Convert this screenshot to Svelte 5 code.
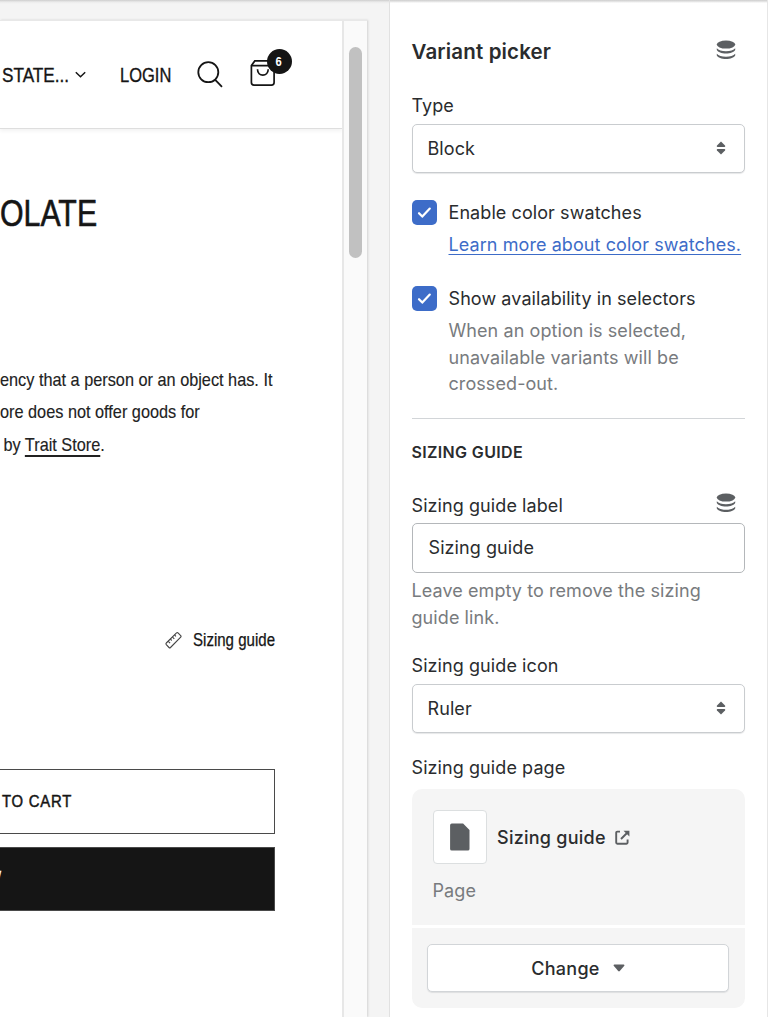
<script lang="ts">
  let type = $state('Block')
  let icon = $state('Ruler')
  let label = $state('Sizing guide')
  let swatches = $state(true)
  let availability = $state(true)
  let cartCount = $state(6)
</script>

{#snippet database()}
  <svg class="database" width="20" height="20" viewBox="0 0 20 20" fill="#5c5f62">
    <ellipse cx="10" cy="4.6" rx="9.2" ry="4" />
    <path d="M.8 8.2c1.6 1.9 5 3 9.2 3s7.6-1.1 9.2-3v1.7c-1.2 2-4.700 3.500-9.200 3.500S2 11.900.8 9.900z" />
    <path d="M.8 13.800c1.600 1.900 5 3 9.200 3s7.600-1.100 9.200-3v1.700c-1.200 2-4.700 3.500-9.200 3.500S2 17.500.8 15.500z" />
  </svg>
{/snippet}

{#snippet arrows()}
  <svg width="10" height="14" viewBox="0 0 10 14" fill="#5c5f62">
    <path d="M5 .4 9 4.500c.5.6.2 1.500-.5 1.500h-7c-.7 0-1-.9-.5-1.500z" />
    <path d="M5 13.600 9 9.500c.5-.6.2-1.500-.5-1.500h-7c-.7 0-1 .9-.5 1.500z" />
  </svg>
{/snippet}

{#snippet check()}
  <svg width="24" height="24" viewBox="0 0 24 24" fill="none" stroke="#fff" stroke-width="2.200" stroke-linecap="round" stroke-linejoin="round">
    <path d="m7 12.200 3.300 3.400 7.500-8" />
  </svg>
{/snippet}

<div class="editor">
  <div class="stage">
    <div class="frame">
      <div class="store">
        <header>
          <span class="country">STATE...</span>
          <svg class="chevron" width="11" height="8" viewBox="0 0 11 8" fill="none" stroke="#151515" stroke-width="1.500">
            <path d="m.8 1.300 4.700 4.500 4.700-4.500" />
          </svg>
          <span class="login">LOGIN</span>
          <svg class="search" width="26" height="27" viewBox="0 0 26 27" fill="none" stroke="#151515" stroke-width="1.800">
            <circle cx="11.300" cy="11.200" r="10" />
            <path d="m18 18.600 7 7.200" />
          </svg>
          <div class="cart">
            <svg width="26" height="28" viewBox="0 0 26 28" fill="none" stroke="#151515" stroke-width="1.700">
              <path d="M1.400 6.600 4.800 1.900h15.600l3.700 4.700v17a2.600 2.600 0 0 1-2.600 2.600H4a2.600 2.600 0 0 1-2.600-2.600zh22.700" />
              <path d="M7.500 10.200c0 7.800 10.700 7.800 10.700 0" />
            </svg>
            <span class="badge"><span class="narrow">{cartCount}</span></span>
          </div>
        </header>

        <main>
          <h1>OLATE</h1>
          <div class="description">
            <p>ency that a person or an object has. It</p>
            <p>ore does not offer goods for</p>
            <p class="byline">by <a href="#store">Trait Store</a>.</p>
          </div>
          <div class="guide">
            <svg width="17" height="17" viewBox="0 0 17 17" fill="none" stroke="#444" stroke-width="1.100">
              <path d="M1.300 11 11.500.900q.8-.6 1.500 0l2.700 2.700q.7.8 0 1.500L5.500 15.500q-.8.7-1.500 0l-2.700-2.800q-.7-.9 0-1.700z" />
              <path d="m3.300 9.300 1.800 1.800M5.400 7.200l1.300 1.300M7.500 5.100l1.800 1.800M9.600 3l1.300 1.300" />
            </svg>
            <span class="narrow">Sizing guide</span>
          </div>
          <button class="add" type="button"><span class="narrow">TO CART</span></button>
          <button class="buy" type="button"><span class="narrow">W</span></button>
        </main>
      </div>
      <div class="scrollbar"><div class="thumb"></div></div>
    </div>
  </div>

  <aside>
    <div class="title">
      <h2>Variant picker</h2>
      {@render database()}
    </div>

    <div class="label type-label">Type</div>
    <button class="field" type="button"><span>{type}</span>{@render arrows()}</button>

    <div class="option">
      <button class="checkbox" type="button" aria-label="Enable color swatches" onclick={() => (swatches = !swatches)}>
        {#if swatches}{@render check()}{/if}
      </button>
      <div>
        <div class="option-name">Enable color swatches</div>
        <a class="learn" href="#swatches">Learn more about color swatches.</a>
      </div>
    </div>

    <div class="option second">
      <button class="checkbox" type="button" aria-label="Show availability" onclick={() => (availability = !availability)}>
        {#if availability}{@render check()}{/if}
      </button>
      <div>
        <div class="option-name">Show availability in selectors</div>
        <p class="help">When an option is selected,<br />unavailable variants will be<br />crossed-out.</p>
      </div>
    </div>

    <hr />
    <h3>SIZING GUIDE</h3>

    <div class="label-row">
      <div class="label">Sizing guide label</div>
      {@render database()}
    </div>
    <input aria-label="Sizing guide label" bind:value={label} />
    <p class="help under">Leave empty to remove the sizing<br />guide link.</p>

    <div class="label icon-label">Sizing guide icon</div>
    <button class="field" type="button"><span>{icon}</span>{@render arrows()}</button>

    <div class="label page-label">Sizing guide page</div>
    <div class="resource">
      <div class="resource-name">
        <div class="preview">
          <svg width="20" height="28" viewBox="0 0 20 28" fill="#5c5f62">
            <path d="M1.800.500h11.300l6.400 6.400v19a1.700 1.700 0 0 1-1.700 1.700h-16a1.700 1.700 0 0 1-1.700-1.700V2.200A1.700 1.700 0 0 1 1.800.5z" />
          </svg>
        </div>
        <span>Sizing guide</span>
        <svg class="external" width="15" height="15" viewBox="0 0 15 15" fill="none" stroke="#5c5f62" stroke-width="1.900">
          <path d="M5 1.600H2.300Q1.200 1.600 1.200 2.700v9.900q0 1.100 1.100 1.100h9.200q1.100 0 1.100-1.100V9.500M6 9l6.500-6.500" />
          <path d="M8.500.700h5.900v5.900l-2-2-1.900-1.900z" fill="#5c5f62" stroke="none" />
        </svg>
      </div>
      <div class="kind">Page</div>
    </div>
    <div class="actions">
      <button class="change" type="button">
        Change
        <svg width="12" height="8" viewBox="0 0 12 8" fill="#5c5f62">
          <path d="M1.300.500h9.400q1.200.2.600 1.200L6.800 7q-.8.800-1.600 0L.7 1.700Q.1.700 1.300.5z" />
        </svg>
      </button>
    </div>
  </aside>
</div>

<style>
  :global(body) {
    overflow: hidden;
  }

  .editor {
    box-sizing: border-box;
    display: flex;
    width: 768px;
    height: 1017px;
    overflow: hidden;
    background: linear-gradient(#cdcdcd, #ececec 2px, transparent 3px), #fff;
    color: #2a2c2e;
    font-family: Inter, 'Liberation Sans', sans-serif;
    font-size: 18px;
    letter-spacing: 0.08px;
  }

  .editor *,
  .editor :global(svg) {
    box-sizing: border-box;
    flex-shrink: 0;
  }

  button {
    font: inherit;
    color: inherit;
    letter-spacing: inherit;
  }

  p,
  h1,
  h2,
  h3 {
    margin: 0;
  }

  .stage {
    width: 390px;
    padding-top: 20px;
    border-right: 1px solid #e1e1e1;
    background: linear-gradient(#cdcdcd, #ebebeb 2px, #f4f4f4 4px);
  }

  .frame {
    display: flex;
    width: 367px;
    height: 997px;
    border-top: 1px solid #e8e8e8;
    box-shadow: 1px 0 2px #d2d2d2;
  }

  .store {
    width: 344px;
    overflow: hidden;
    background: #fff;
    border-right: 2px solid #e7e7e7;
    color: #151515;
    font-family: 'Liberation Sans', Arial, sans-serif;
    letter-spacing: 0;
    white-space: nowrap;
  }

  /* condensed look for the storefront typeface */
  .country,
  .login,
  .narrow,
  h1,
  .description p {
    display: inline-block;
    transform: scaleX(0.86);
    transform-origin: left center;
  }

  header {
    display: flex;
    height: 108px;
    padding-left: 2px;
    border-bottom: 1px solid #dedede;
    box-shadow: 0 2px 4px #f2f2f2;
    line-height: 24px;
    font-size: 19.500px;
    -webkit-text-stroke: 0.35px;
  }

  .country,
  .login {
    margin-top: 42px;
  }

  .country {
    width: 67px;
    transform: scaleX(0.88);
  }

  .chevron {
    margin: 50px 0 0 6px;
  }

  .login {
    width: 51px;
    margin-left: 34px;
    transform: scaleX(0.845);
  }

  .search {
    margin: 40px 0 0 26px;
  }

  .cart {
    position: relative;
    margin: 38px 0 0 27px;
  }

  .badge {
    position: absolute;
    top: -10.500px;
    left: 16.500px;
    width: 25px;
    height: 25px;
    border-radius: 50%;
    background: #151515;
    color: #fff;
    font-size: 13px;
    font-weight: bold;
    line-height: 25px;
    text-align: center;
    -webkit-text-stroke: 0;
  }

  .badge .narrow {
    transform-origin: center;
  }

  h1 {
    display: block;
    width: 120px;
    height: 50px;
    margin-top: 60px;
    font-size: 36.500px;
    font-weight: 400;
    line-height: 50px;
    transform: scaleX(0.83);
    -webkit-text-stroke: 0.6px;
  }

  .description {
    height: 97px;
    margin-top: 125px;
    font-size: 19px;
    line-height: 32.300px;
    color: #222;
    -webkit-text-stroke: 0.15px;
  }

  .description p {
    display: block;
    width: 330px;
    transform: scaleX(0.857);
  }

  .description .byline {
    padding-left: 4px;
  }

  .description a {
    color: inherit;
    text-decoration: none;
    border-bottom: 2px solid #222;
  }

  .guide {
    display: flex;
    align-items: center;
    height: 26px;
    margin-top: 166px;
    padding-left: 165px;
    font-size: 17.500px;
    -webkit-text-stroke: 0.25px;
  }

  .guide span {
    margin-left: 11px;
  }

  .add,
  .buy {
    display: block;
    width: 276px;
    height: 65px;
    margin: 116px 0 0 -1px;
    padding: 0 0 0 2px;
    border: 1px solid #4a4a4a;
    border-radius: 0;
    background: #fff;
    font-size: 17.300px;
    letter-spacing: 0.9px;
    text-align: left;
    -webkit-text-stroke: 0.5px;
  }

  .buy {
    height: 64px;
    margin-top: 13px;
    padding-bottom: 3px;
    background: #151515;
    color: #fff;
  }

  .buy span {
    margin-left: -15.500px;
  }

  .scrollbar {
    width: 23px;
    padding: 26px 0 0 5px;
    background: #fafafa;
  }

  .thumb {
    width: 13px;
    height: 211px;
    border-radius: 7px;
    background: #c1c1c1;
  }

  aside {
    width: 378px;
    padding-left: 21.500px;
    padding-right: 23px;
    border-right: 1px solid #e6e6e6;
  }

  .title {
    display: flex;
    justify-content: space-between;
    height: 66px;
    padding: 38px 8px 0 0;
  }

  h2 {
    font-size: 20.500px;
    font-weight: 600;
    letter-spacing: 0.15px;
    line-height: 28px;
  }

  .title :global(.database) {
    margin-top: 2px;
  }

  .label {
    height: 27px;
    line-height: 26px;
  }

  .type-label {
    margin-top: 27px;
  }

  .field,
  input {
    display: flex;
    align-items: center;
    justify-content: space-between;
    width: 333px;
    height: 49px;
    padding: 0 18px 0 15px;
    border: 1px solid #c9cccf;
    border-radius: 5px;
    background: #fff;
    box-shadow: 0 1px 1px #e6e7e8;
  }

  .field {
    margin-top: 4px;
    padding-bottom: 1px;
  }

  input {
    height: 50px;
    padding-left: 16px;
    padding-bottom: 2px;
    border-color: #b4b7ba;
    box-shadow: none;
    color: inherit;
    font: inherit;
    letter-spacing: inherit;
  }

  .option {
    display: flex;
    gap: 12px;
    height: 59px;
    margin-top: 27px;
  }

  .checkbox {
    display: flex;
    align-items: center;
    justify-content: center;
    width: 25px;
    height: 25px;
    padding: 0;
    border: 0;
    border-radius: 5px;
    background: #3d6cc8;
  }

  .option-name {
    height: 27px;
    line-height: 25px;
  }

  .learn {
    display: block;
    margin-top: 4px;
    color: #3d6cc8;
    line-height: 27px;
    text-underline-offset: 3px;
  }

  .help {
    margin-top: 5px;
    color: #787b7e;
    line-height: 26.700px;
  }

  .second {
    height: 132px;
  }

  hr {
    width: 333px;
    height: 1px;
    margin: 0;
    border: 0;
    background: #d2d5d8;
  }

  h3 {
    height: 24px;
    margin-top: 21px;
    font-size: 16px;
    font-weight: 600;
    letter-spacing: 0.35px;
    line-height: 24px;
  }

  .label-row {
    display: flex;
    justify-content: space-between;
    height: 59px;
    padding: 29px 8px 0 0;
  }

  .under {
    margin-top: 5px;
  }

  .icon-label {
    margin-top: 22px;
  }

  .page-label {
    margin-top: 22px;
  }

  .resource {
    width: 333px;
    height: 136px;
    margin-top: 7px;
    padding: 21px;
    border-radius: 10px 10px 0 0;
    background: #f5f5f5;
  }

  .resource-name {
    display: flex;
    align-items: center;
    font-weight: 500;
    letter-spacing: 0.25px;
  }

  .preview {
    display: flex;
    align-items: center;
    justify-content: center;
    width: 54px;
    height: 54px;
    margin-right: 10.500px;
    border: 1px solid #dcdfe0;
    border-radius: 4px;
    background: #fff;
  }

  .external {
    margin-left: 9px;
  }

  .kind {
    margin-top: 14px;
    color: #787b7e;
    line-height: 26px;
  }

  .actions {
    width: 333px;
    height: 80px;
    margin-top: 3px;
    padding: 16px 15.500px;
    border-radius: 0 0 10px 10px;
    background: #f5f5f5;
  }

  .change {
    display: flex;
    align-items: center;
    justify-content: center;
    gap: 13px;
    width: 302px;
    height: 48px;
    border: 1px solid #d2d5d8;
    border-radius: 5px;
    background: #fff;
    box-shadow: 0 1px 1px #dedfe0;
    font-weight: 500;
    letter-spacing: 0.25px;
  }
</style>
